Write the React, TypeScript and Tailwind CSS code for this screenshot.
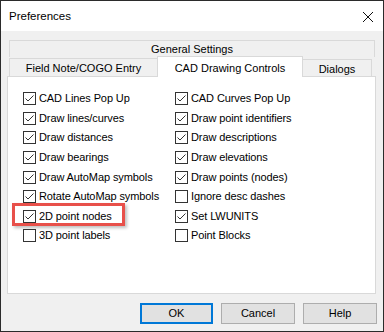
import React from "react";

const left: [string, boolean][] = [
  ["CAD Lines Pop Up", true],
  ["Draw lines/curves", true],
  ["Draw distances", true],
  ["Draw bearings", true],
  ["Draw AutoMap symbols", true],
  ["Rotate AutoMap symbols", true],
  ["2D point nodes", true],
  ["3D point labels", false],
];
const right: [string, boolean][] = [
  ["CAD Curves Pop Up", true],
  ["Draw point identifiers", true],
  ["Draw descriptions", true],
  ["Draw elevations", true],
  ["Draw points (nodes)", true],
  ["Ignore desc dashes", false],
  ["Set LWUNITS", true],
  ["Point Blocks", false],
];

function Box({ checked }: { checked: boolean }) {
  return (
    <div className="w-[13px] h-[13px] border border-[#333333] bg-white shrink-0 flex items-center justify-center">
      {checked && (
        <svg width="11" height="11" viewBox="0 0 11 11">
          <polyline points="1.5,5.5 4,8 9.5,2.5" fill="none" stroke="#333333" strokeWidth="1" />
        </svg>
      )}
    </div>
  );
}

function Row({ label, checked, highlight }: { label: string; checked: boolean; highlight?: boolean }) {
  return (
    <div className="relative h-[19.6px] flex items-center gap-[3px]">
      <Box checked={checked} />
      <span className="leading-none whitespace-nowrap tracking-[-0.1px]">{label}</span>
      {highlight && (
        <div className="absolute left-[-11px] top-[-4px] w-[113px] h-[23px] border-[3px] border-[#e8504a] shadow-[2px_2px_3px_rgba(0,0,0,0.25)]" />
      )}
    </div>
  );
}

export default function App() {
  return (
    <div
      className="w-[384px] h-[332px] bg-[#f0f0f0] border border-[#2b2b2b] flex flex-col text-[11px] text-black"
      style={{ fontFamily: '"Liberation Sans", Arial, sans-serif' }}
    >
      <div className="h-[30px] bg-white flex items-center justify-between pl-[8px] pr-[9px] shrink-0">
        <span className="mt-[2px] text-[11.5px]">Preferences</span>
        <svg width="12" height="12" viewBox="0 0 12 12" className="mt-[2px]">
          <line x1="1" y1="1" x2="11" y2="11" stroke="#111" strokeWidth="1" />
          <line x1="11" y1="1" x2="1" y2="11" stroke="#111" strokeWidth="1" />
        </svg>
      </div>

      <div className="mt-[9px] ml-[6px] w-[369px] flex flex-col">
        <div className="ml-[2px] w-[366px] h-[17px] border-t border-l border-r border-[#d9d9d9] flex items-center justify-center">
          <span className="mt-[1px]">General Settings</span>
        </div>
        <div className="flex items-end h-[20px] relative z-10 mb-[-1px]">
          <div className="ml-[2px] w-[148px] h-[19px] border-t border-l border-[#d9d9d9] flex items-center justify-center">
            <span className="mt-[1px]">Field Note/COGO Entry</span>
          </div>
          <div className="w-[146px] h-[21px] bg-white border-t border-l border-r border-[#d9d9d9] flex items-start justify-center pt-[3px]">
            <span>CAD Drawing Controls</span>
          </div>
          <div className="w-[69px] h-[18px] border-t border-r border-[#d9d9d9] flex items-center justify-center">
            <span className="mt-[1px]">Dialogs</span>
          </div>
        </div>
        <div className="h-[218px] bg-white border border-[#d9d9d9] pt-[12px] pl-[15px] flex">
          <div className="w-[152px] flex flex-col">
            {left.map(([l, c], i) => (
              <Row key={l} label={l} checked={c} highlight={i === 6} />
            ))}
          </div>
          <div className="flex flex-col">
            {right.map(([l, c]) => (
              <Row key={l} label={l} checked={c} />
            ))}
          </div>
        </div>
      </div>

      <div className="mt-[9px] flex justify-end gap-[8px] pr-[6px]">
        <button className="w-[73px] h-[21px] bg-[#e1e1e1] border-2 border-[#0078d7] flex items-center justify-center">
          OK
        </button>
        <button className="w-[74px] h-[21px] bg-[#e1e1e1] border border-[#adadad] flex items-center justify-center">
          Cancel
        </button>
        <button className="w-[74px] h-[21px] bg-[#e1e1e1] border border-[#adadad] flex items-center justify-center">
          Help
        </button>
      </div>
    </div>
  );
}
